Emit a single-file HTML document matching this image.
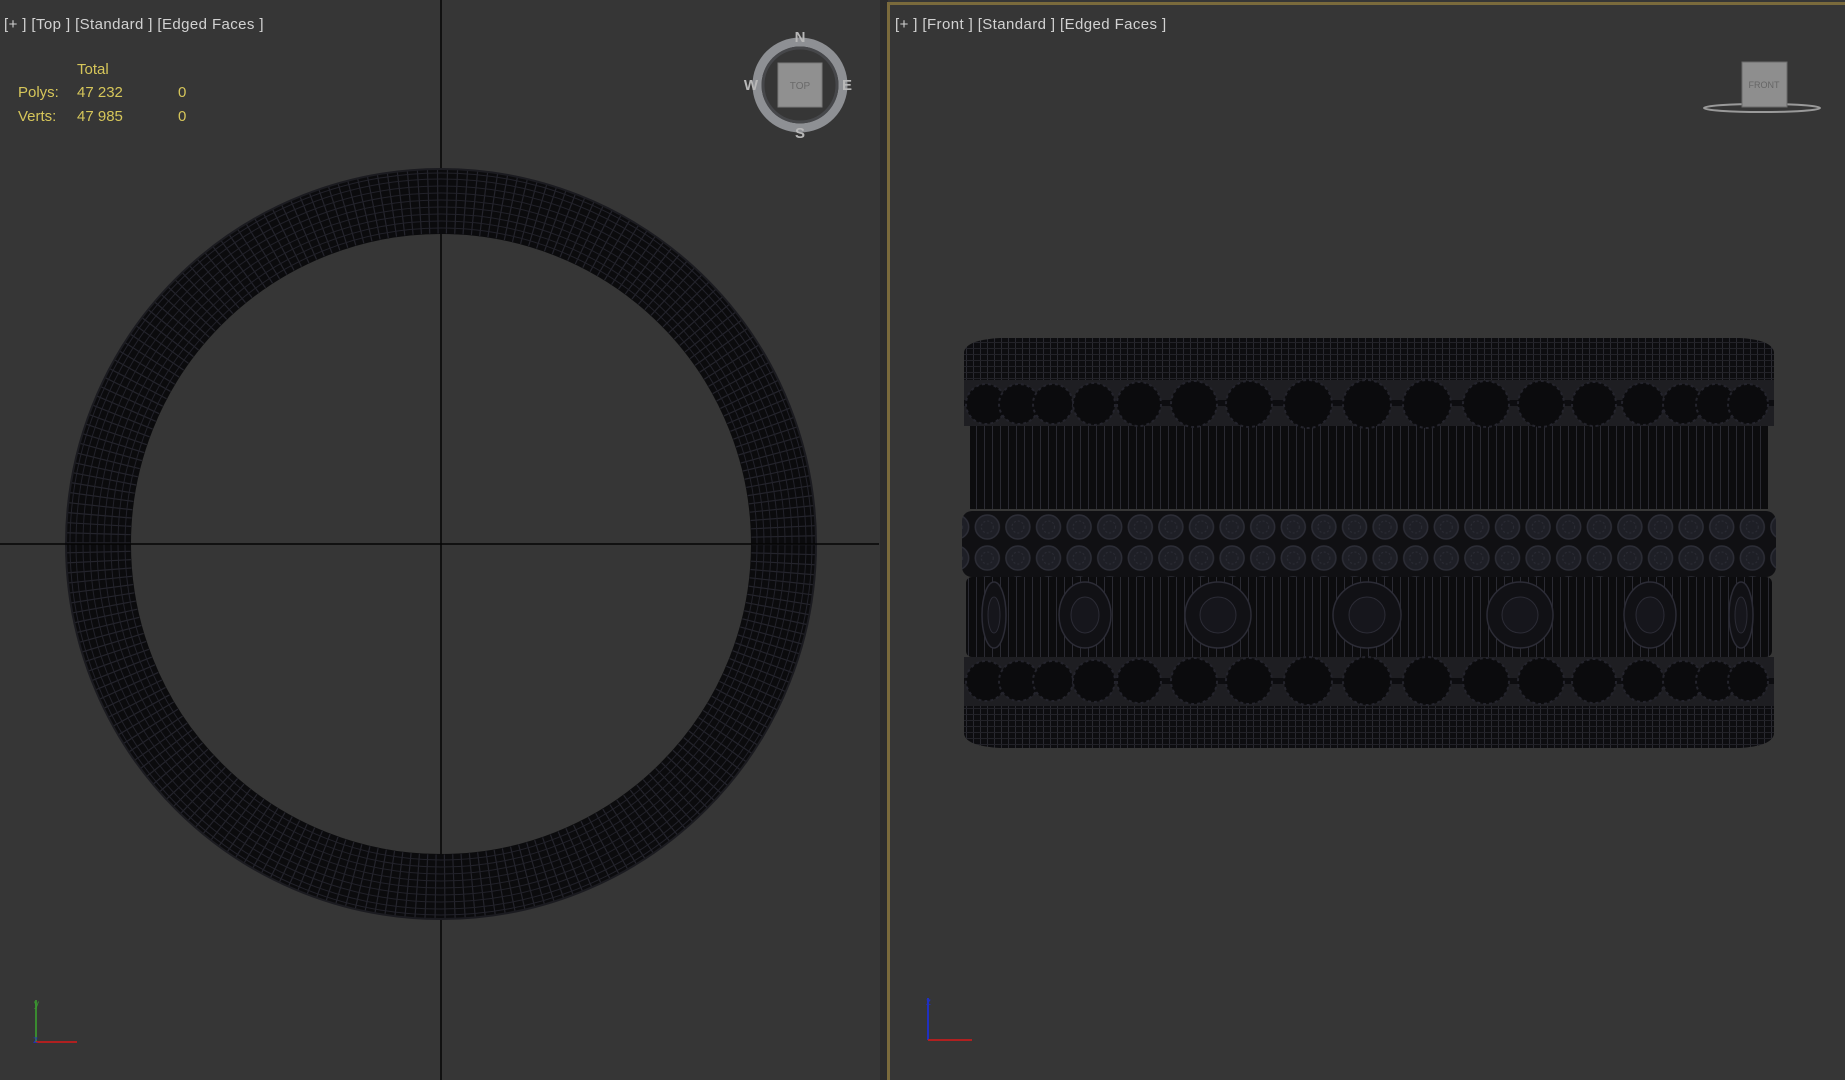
<!DOCTYPE html>
<html><head><meta charset="utf-8"><style>
html,body{margin:0;padding:0;background:#363636;width:1845px;height:1080px;overflow:hidden}
svg{display:block}
text{font-family:"Liberation Sans","DejaVu Sans",sans-serif}
</style></head><body>
<svg width="1845" height="1080" viewBox="0 0 1845 1080" xmlns="http://www.w3.org/2000/svg">
<defs>
<pattern id="vl" width="8" height="10" patternUnits="userSpaceOnUse"><rect width="8" height="10" fill="#0c0c0e"/><rect x="0" width="1" height="10" fill="#2a2a32"/></pattern>
<pattern id="grid" width="7" height="6" patternUnits="userSpaceOnUse"><rect width="7" height="6" fill="#0d0d10"/><rect x="0" width="1" height="6" fill="#292930"/><rect y="0" width="7" height="1" fill="#222228"/></pattern>
<pattern id="sb" x="972" y="511.5" width="30.6" height="31" patternUnits="userSpaceOnUse"><rect width="30.6" height="31" fill="#101013"/><circle cx="15.3" cy="15.5" r="12" fill="#1e1f26" stroke="#2c2d36" stroke-width="1.5"/><circle cx="15.3" cy="15.5" r="6" fill="none" stroke="#2c2d36" stroke-width="1" stroke-dasharray="2 2"/></pattern>
</defs>
<rect width="1845" height="1080" fill="#363636"/>
<rect x="880" y="0" width="8" height="1080" fill="#2c2c2c"/>
<rect x="888" y="3" width="957" height="1077" fill="#363636"/>
<rect x="888.5" y="3.5" width="960" height="1080" fill="none" stroke="#7a6a3c" stroke-width="3"/>

<line x1="441" y1="0" x2="441" y2="1080" stroke="#050505" stroke-width="1.5"/>
<circle cx="441" cy="544" r="342.5" fill="none" stroke="#0b0b0d" stroke-width="65"/>
<circle cx="441" cy="544" r="342.5" fill="none" stroke="#24242c" stroke-width="64" stroke-dasharray="1.2 8"/>
<g fill="none" stroke="#22222a" stroke-width="1">
<circle cx="441" cy="544" r="316"/><circle cx="441" cy="544" r="323"/><circle cx="441" cy="544" r="330"/><circle cx="441" cy="544" r="337"/><circle cx="441" cy="544" r="344"/><circle cx="441" cy="544" r="351"/><circle cx="441" cy="544" r="358"/><circle cx="441" cy="544" r="365"/><circle cx="441" cy="544" r="371"/>
</g>
<circle cx="441" cy="544" r="375" fill="none" stroke="#1b1b20" stroke-width="2"/>
<line x1="0" y1="544" x2="879" y2="544" stroke="#050505" stroke-width="1.5"/>

<text x="4" y="29" font-size="15" letter-spacing="0.4" fill="#d2d2d2" xml:space="preserve">[+ ] [Top ] [Standard ] [Edged Faces ]</text>
<g font-size="15" fill="#d6c65a">
<text x="77" y="74">Total</text>
<text x="18" y="97">Polys:</text><text x="77" y="97">47 232</text><text x="178" y="97">0</text>
<text x="18" y="121">Verts:</text><text x="77" y="121">47 985</text><text x="178" y="121">0</text>
</g>
<circle cx="800" cy="85" r="43" fill="none" stroke="#8e9094" stroke-width="9"/>
<circle cx="800" cy="85" r="37" fill="none" stroke="#46474a" stroke-width="3"/>
<rect x="778" y="63" width="44" height="44" fill="#909090" stroke="#7a7a7a"/>
<text x="800" y="89" font-size="10" fill="#6a6a6a" text-anchor="middle">TOP</text>
<g font-size="15" font-weight="bold" fill="#b8b8b8" text-anchor="middle">
<text x="800" y="42">N</text><text x="800" y="138">S</text><text x="751" y="90">W</text><text x="847" y="90">E</text></g>
<line x1="36" y1="1000" x2="36" y2="1042" stroke="#3a8a30" stroke-width="2"/>
<line x1="36" y1="1042" x2="77" y2="1042" stroke="#b02020" stroke-width="2"/>
<text x="34" y="1007" font-size="10" fill="#3a9a30">y</text>
<text x="33" y="1043" font-size="10" fill="#2030c0">z</text>

<text x="895" y="29" font-size="15" letter-spacing="0.4" fill="#d2d2d2" xml:space="preserve">[+ ] [Front ] [Standard ] [Edged Faces ]</text>
<ellipse cx="1762" cy="108" rx="58" ry="4" fill="none" stroke="#9a9a9a" stroke-width="2"/>
<rect x="1742" y="62" width="45" height="45" fill="#8e8e8e" stroke="#6a6a6a"/>
<text x="1764" y="88" font-size="9" fill="#666" text-anchor="middle">FRONT</text>
<line x1="928" y1="998" x2="928" y2="1040" stroke="#2030c0" stroke-width="2"/>
<line x1="928" y1="1040" x2="972" y2="1040" stroke="#b02020" stroke-width="2"/>
<text x="926" y="1005" font-size="10" fill="#2030c0">z</text>

<path d="M964 352 Q966 340 1000 338 L1740 338 Q1772 340 1774 352 L1774 380 L964 380 Z" fill="url(#grid)"/>
<rect x="964" y="380" width="810" height="46" fill="#1e1e22"/>
<rect x="964" y="400" width="810" height="6" fill="#0d0d10"/>
<rect x="970" y="426" width="798" height="83" fill="url(#vl)"/>
<rect x="962" y="511" width="814" height="66" fill="url(#sb)" rx="10"/>
<rect x="966" y="577" width="806" height="80" fill="url(#vl)" rx="6"/>
<rect x="964" y="657" width="810" height="49" fill="#1e1e22"/>
<rect x="964" y="678" width="810" height="6" fill="#0d0d10"/>
<path d="M964 706 L1774 706 L1774 734 Q1772 746 1740 748 L1000 748 Q966 746 964 734 Z" fill="url(#grid)"/>
<g fill="#0b0b0d" stroke="#24242c" stroke-width="2" stroke-dasharray="3 3">
<circle cx="986" cy="404" r="20"/><circle cx="1019" cy="404" r="20"/><circle cx="1053" cy="404" r="20"/><circle cx="1094" cy="404" r="21"/><circle cx="1139" cy="404" r="22"/><circle cx="1194" cy="404" r="23"/><circle cx="1249" cy="404" r="23"/><circle cx="1308" cy="404" r="24"/><circle cx="1367" cy="404" r="24"/><circle cx="1427" cy="404" r="24"/><circle cx="1486" cy="404" r="23"/><circle cx="1541" cy="404" r="23"/><circle cx="1594" cy="404" r="22"/><circle cx="1643" cy="404" r="21"/><circle cx="1683" cy="404" r="20"/><circle cx="1716" cy="404" r="20"/><circle cx="1748" cy="404" r="20"/>
<circle cx="986" cy="681" r="20"/><circle cx="1019" cy="681" r="20"/><circle cx="1053" cy="681" r="20"/><circle cx="1094" cy="681" r="21"/><circle cx="1139" cy="681" r="22"/><circle cx="1194" cy="681" r="23"/><circle cx="1249" cy="681" r="23"/><circle cx="1308" cy="681" r="24"/><circle cx="1367" cy="681" r="24"/><circle cx="1427" cy="681" r="24"/><circle cx="1486" cy="681" r="23"/><circle cx="1541" cy="681" r="23"/><circle cx="1594" cy="681" r="22"/><circle cx="1643" cy="681" r="21"/><circle cx="1683" cy="681" r="20"/><circle cx="1716" cy="681" r="20"/><circle cx="1748" cy="681" r="20"/>
</g>
<g fill="#111115" stroke="#2c2c36" stroke-width="1.5">
<ellipse cx="994" cy="615" rx="12" ry="33"/><ellipse cx="1085" cy="615" rx="26" ry="33"/><ellipse cx="1218" cy="615" rx="33" ry="33"/><ellipse cx="1367" cy="615" rx="34" ry="33"/><ellipse cx="1520" cy="615" rx="33" ry="33"/><ellipse cx="1650" cy="615" rx="26" ry="33"/><ellipse cx="1741" cy="615" rx="12" ry="33"/>
</g>
<g fill="#16161c" stroke="#2c2c36" stroke-width="1">
<ellipse cx="994" cy="615" rx="6" ry="18"/><ellipse cx="1085" cy="615" rx="14" ry="18"/><ellipse cx="1218" cy="615" rx="18" ry="18"/><ellipse cx="1367" cy="615" rx="18" ry="18"/><ellipse cx="1520" cy="615" rx="18" ry="18"/><ellipse cx="1650" cy="615" rx="14" ry="18"/><ellipse cx="1741" cy="615" rx="6" ry="18"/>
</g>
</svg>
</body></html>
